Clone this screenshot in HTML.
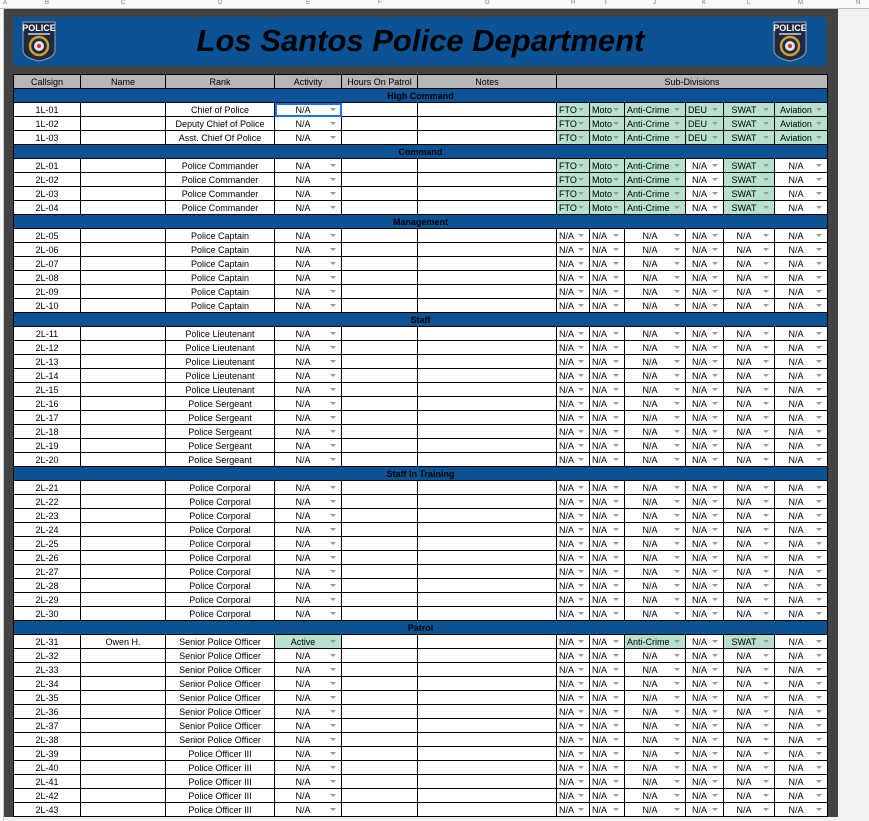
<!DOCTYPE html>
<html><head><meta charset="utf-8"><style>
body{margin:0;width:869px;height:821px;overflow:hidden;background:#f1f1f1;font-family:"Liberation Sans",sans-serif;position:relative}
.colh{position:absolute;left:0;top:0;width:869px;height:8px;background:#f8f9fa;border-bottom:1px solid #c0c0c0;font-size:6px;color:#777;overflow:hidden}
.colh span{position:absolute;top:0}
.rowh{position:absolute;left:0;top:9px;width:3px;height:812px;background:#f8f9fa;border-right:1px solid #ccc}
.frame{position:absolute;left:4px;top:9px;width:834px;height:808px;background:#434343}
.banner{position:absolute;left:13px;top:17px;width:813px;height:49px;background:#0b5394}
.title{position:absolute;left:0;right:0;top:6px;text-align:center;font:italic bold 31px "Liberation Sans",sans-serif;color:#000;padding-left:2px}
.badge{position:absolute;top:3px;width:36px;height:42px}
table{position:absolute;left:13px;top:74px;border-collapse:collapse;table-layout:fixed;width:814px;font-size:9px}
td{border:1px solid #000;height:13px;padding:0 2px;text-align:center;background:#fff;white-space:nowrap;overflow:hidden;line-height:12px;position:relative}
tr.h td{background:#b7b7b7}
tr.s td{background:#0b5394;font-weight:bold}
td.g{background:#b7e1cd}
td.l{text-align:left}
td.d{padding-right:12px}
td.d::after{content:"";position:absolute;right:5px;top:5px;border-left:3px solid transparent;border-right:3px solid transparent;border-top:3px solid #999}
td.sel{outline:2px solid #1a73e8;outline-offset:-2px}
</style></head><body>
<div class="colh"><span style="left:3px">A</span><span style="left:45px">B</span><span style="left:121px">C</span><span style="left:218px">D</span><span style="left:306px">E</span><span style="left:378px">F</span><span style="left:485px">G</span><span style="left:571px">H</span><span style="left:605px">I</span><span style="left:653px">J</span><span style="left:702px">K</span><span style="left:747px">L</span><span style="left:798px">M</span><span style="left:856px">N</span></div>
<div class="rowh"></div>
<div class="frame"></div>
<div class="banner">
<svg class="badge" style="left:8px" viewBox="0 0 36 42"><path d="M2 2H34V30Q34 38 18 41Q2 38 2 30Z" fill="#1c2a44" stroke="#8a93a3" stroke-width="1.2"/><text x="18" y="11" font-size="9" font-weight="bold" fill="#fff" text-anchor="middle" font-family="Liberation Sans">POLICE</text><rect x="7" y="13" width="22" height="2" fill="#aab"/><circle cx="18" cy="26" r="9" fill="none" stroke="#d4a02a" stroke-width="2.5"/><circle cx="18" cy="26" r="5" fill="#dfe3ea"/><circle cx="18" cy="26" r="2" fill="#c33"/></svg>
<div class="title">Los Santos Police Department</div>
<svg class="badge" style="left:759px" viewBox="0 0 36 42"><path d="M2 2H34V30Q34 38 18 41Q2 38 2 30Z" fill="#1c2a44" stroke="#8a93a3" stroke-width="1.2"/><text x="18" y="11" font-size="9" font-weight="bold" fill="#fff" text-anchor="middle" font-family="Liberation Sans">POLICE</text><rect x="7" y="13" width="22" height="2" fill="#aab"/><circle cx="18" cy="26" r="9" fill="none" stroke="#d4a02a" stroke-width="2.5"/><circle cx="18" cy="26" r="5" fill="#dfe3ea"/><circle cx="18" cy="26" r="2" fill="#c33"/></svg>
</div>
<table>
<colgroup><col style="width:67px"><col style="width:85px"><col style="width:109px"><col style="width:67px"><col style="width:76px"><col style="width:139px"><col style="width:33px"><col style="width:35px"><col style="width:61px"><col style="width:38px"><col style="width:51px"><col style="width:53px"></colgroup>
<tr class="h"><td>Callsign</td><td>Name</td><td>Rank</td><td>Activity</td><td>Hours On Patrol</td><td>Notes</td><td colspan="6">Sub-Divisions</td></tr>
<tr class="s"><td colspan="12">High Command</td></tr>
<tr><td>1L-01</td><td></td><td>Chief of Police</td><td class="d sel">N/A</td><td></td><td></td><td class="g l d">FTO</td><td class="g l d">Moto</td><td class="g l d">Anti-Crime</td><td class="g l d">DEU</td><td class="g d">SWAT</td><td class="g d">Aviation</td></tr>
<tr><td>1L-02</td><td></td><td>Deputy Chief of Police</td><td class="d">N/A</td><td></td><td></td><td class="g l d">FTO</td><td class="g l d">Moto</td><td class="g l d">Anti-Crime</td><td class="g l d">DEU</td><td class="g d">SWAT</td><td class="g d">Aviation</td></tr>
<tr><td>1L-03</td><td></td><td>Asst. Chief Of Police</td><td class="d">N/A</td><td></td><td></td><td class="g l d">FTO</td><td class="g l d">Moto</td><td class="g l d">Anti-Crime</td><td class="g l d">DEU</td><td class="g d">SWAT</td><td class="g d">Aviation</td></tr>
<tr class="s"><td colspan="12">Command</td></tr>
<tr><td>2L-01</td><td></td><td>Police Commander</td><td class="d">N/A</td><td></td><td></td><td class="g l d">FTO</td><td class="g l d">Moto</td><td class="g l d">Anti-Crime</td><td class="d">N/A</td><td class="g d">SWAT</td><td class="d">N/A</td></tr>
<tr><td>2L-02</td><td></td><td>Police Commander</td><td class="d">N/A</td><td></td><td></td><td class="g l d">FTO</td><td class="g l d">Moto</td><td class="g l d">Anti-Crime</td><td class="d">N/A</td><td class="g d">SWAT</td><td class="d">N/A</td></tr>
<tr><td>2L-03</td><td></td><td>Police Commander</td><td class="d">N/A</td><td></td><td></td><td class="g l d">FTO</td><td class="g l d">Moto</td><td class="g l d">Anti-Crime</td><td class="d">N/A</td><td class="g d">SWAT</td><td class="d">N/A</td></tr>
<tr><td>2L-04</td><td></td><td>Police Commander</td><td class="d">N/A</td><td></td><td></td><td class="g l d">FTO</td><td class="g l d">Moto</td><td class="g l d">Anti-Crime</td><td class="d">N/A</td><td class="g d">SWAT</td><td class="d">N/A</td></tr>
<tr class="s"><td colspan="12">Management</td></tr>
<tr><td>2L-05</td><td></td><td>Police Captain</td><td class="d">N/A</td><td></td><td></td><td class="l d">N/A</td><td class="l d">N/A</td><td class="d">N/A</td><td class="d">N/A</td><td class="d">N/A</td><td class="d">N/A</td></tr>
<tr><td>2L-06</td><td></td><td>Police Captain</td><td class="d">N/A</td><td></td><td></td><td class="l d">N/A</td><td class="l d">N/A</td><td class="d">N/A</td><td class="d">N/A</td><td class="d">N/A</td><td class="d">N/A</td></tr>
<tr><td>2L-07</td><td></td><td>Police Captain</td><td class="d">N/A</td><td></td><td></td><td class="l d">N/A</td><td class="l d">N/A</td><td class="d">N/A</td><td class="d">N/A</td><td class="d">N/A</td><td class="d">N/A</td></tr>
<tr><td>2L-08</td><td></td><td>Police Captain</td><td class="d">N/A</td><td></td><td></td><td class="l d">N/A</td><td class="l d">N/A</td><td class="d">N/A</td><td class="d">N/A</td><td class="d">N/A</td><td class="d">N/A</td></tr>
<tr><td>2L-09</td><td></td><td>Police Captain</td><td class="d">N/A</td><td></td><td></td><td class="l d">N/A</td><td class="l d">N/A</td><td class="d">N/A</td><td class="d">N/A</td><td class="d">N/A</td><td class="d">N/A</td></tr>
<tr><td>2L-10</td><td></td><td>Police Captain</td><td class="d">N/A</td><td></td><td></td><td class="l d">N/A</td><td class="l d">N/A</td><td class="d">N/A</td><td class="d">N/A</td><td class="d">N/A</td><td class="d">N/A</td></tr>
<tr class="s"><td colspan="12">Staff</td></tr>
<tr><td>2L-11</td><td></td><td>Police Lieutenant</td><td class="d">N/A</td><td></td><td></td><td class="l d">N/A</td><td class="l d">N/A</td><td class="d">N/A</td><td class="d">N/A</td><td class="d">N/A</td><td class="d">N/A</td></tr>
<tr><td>2L-12</td><td></td><td>Police Lieutenant</td><td class="d">N/A</td><td></td><td></td><td class="l d">N/A</td><td class="l d">N/A</td><td class="d">N/A</td><td class="d">N/A</td><td class="d">N/A</td><td class="d">N/A</td></tr>
<tr><td>2L-13</td><td></td><td>Police Lieutenant</td><td class="d">N/A</td><td></td><td></td><td class="l d">N/A</td><td class="l d">N/A</td><td class="d">N/A</td><td class="d">N/A</td><td class="d">N/A</td><td class="d">N/A</td></tr>
<tr><td>2L-14</td><td></td><td>Police Lieutenant</td><td class="d">N/A</td><td></td><td></td><td class="l d">N/A</td><td class="l d">N/A</td><td class="d">N/A</td><td class="d">N/A</td><td class="d">N/A</td><td class="d">N/A</td></tr>
<tr><td>2L-15</td><td></td><td>Police Lieutenant</td><td class="d">N/A</td><td></td><td></td><td class="l d">N/A</td><td class="l d">N/A</td><td class="d">N/A</td><td class="d">N/A</td><td class="d">N/A</td><td class="d">N/A</td></tr>
<tr><td>2L-16</td><td></td><td>Police Sergeant</td><td class="d">N/A</td><td></td><td></td><td class="l d">N/A</td><td class="l d">N/A</td><td class="d">N/A</td><td class="d">N/A</td><td class="d">N/A</td><td class="d">N/A</td></tr>
<tr><td>2L-17</td><td></td><td>Police Sergeant</td><td class="d">N/A</td><td></td><td></td><td class="l d">N/A</td><td class="l d">N/A</td><td class="d">N/A</td><td class="d">N/A</td><td class="d">N/A</td><td class="d">N/A</td></tr>
<tr><td>2L-18</td><td></td><td>Police Sergeant</td><td class="d">N/A</td><td></td><td></td><td class="l d">N/A</td><td class="l d">N/A</td><td class="d">N/A</td><td class="d">N/A</td><td class="d">N/A</td><td class="d">N/A</td></tr>
<tr><td>2L-19</td><td></td><td>Police Sergeant</td><td class="d">N/A</td><td></td><td></td><td class="l d">N/A</td><td class="l d">N/A</td><td class="d">N/A</td><td class="d">N/A</td><td class="d">N/A</td><td class="d">N/A</td></tr>
<tr><td>2L-20</td><td></td><td>Police Sergeant</td><td class="d">N/A</td><td></td><td></td><td class="l d">N/A</td><td class="l d">N/A</td><td class="d">N/A</td><td class="d">N/A</td><td class="d">N/A</td><td class="d">N/A</td></tr>
<tr class="s"><td colspan="12">Staff In Training</td></tr>
<tr><td>2L-21</td><td></td><td>Police Corporal</td><td class="d">N/A</td><td></td><td></td><td class="l d">N/A</td><td class="l d">N/A</td><td class="d">N/A</td><td class="d">N/A</td><td class="d">N/A</td><td class="d">N/A</td></tr>
<tr><td>2L-22</td><td></td><td>Police Corporal</td><td class="d">N/A</td><td></td><td></td><td class="l d">N/A</td><td class="l d">N/A</td><td class="d">N/A</td><td class="d">N/A</td><td class="d">N/A</td><td class="d">N/A</td></tr>
<tr><td>2L-23</td><td></td><td>Police Corporal</td><td class="d">N/A</td><td></td><td></td><td class="l d">N/A</td><td class="l d">N/A</td><td class="d">N/A</td><td class="d">N/A</td><td class="d">N/A</td><td class="d">N/A</td></tr>
<tr><td>2L-24</td><td></td><td>Police Corporal</td><td class="d">N/A</td><td></td><td></td><td class="l d">N/A</td><td class="l d">N/A</td><td class="d">N/A</td><td class="d">N/A</td><td class="d">N/A</td><td class="d">N/A</td></tr>
<tr><td>2L-25</td><td></td><td>Police Corporal</td><td class="d">N/A</td><td></td><td></td><td class="l d">N/A</td><td class="l d">N/A</td><td class="d">N/A</td><td class="d">N/A</td><td class="d">N/A</td><td class="d">N/A</td></tr>
<tr><td>2L-26</td><td></td><td>Police Corporal</td><td class="d">N/A</td><td></td><td></td><td class="l d">N/A</td><td class="l d">N/A</td><td class="d">N/A</td><td class="d">N/A</td><td class="d">N/A</td><td class="d">N/A</td></tr>
<tr><td>2L-27</td><td></td><td>Police Corporal</td><td class="d">N/A</td><td></td><td></td><td class="l d">N/A</td><td class="l d">N/A</td><td class="d">N/A</td><td class="d">N/A</td><td class="d">N/A</td><td class="d">N/A</td></tr>
<tr><td>2L-28</td><td></td><td>Police Corporal</td><td class="d">N/A</td><td></td><td></td><td class="l d">N/A</td><td class="l d">N/A</td><td class="d">N/A</td><td class="d">N/A</td><td class="d">N/A</td><td class="d">N/A</td></tr>
<tr><td>2L-29</td><td></td><td>Police Corporal</td><td class="d">N/A</td><td></td><td></td><td class="l d">N/A</td><td class="l d">N/A</td><td class="d">N/A</td><td class="d">N/A</td><td class="d">N/A</td><td class="d">N/A</td></tr>
<tr><td>2L-30</td><td></td><td>Police Corporal</td><td class="d">N/A</td><td></td><td></td><td class="l d">N/A</td><td class="l d">N/A</td><td class="d">N/A</td><td class="d">N/A</td><td class="d">N/A</td><td class="d">N/A</td></tr>
<tr class="s"><td colspan="12">Patrol</td></tr>
<tr><td>2L-31</td><td>Owen H.</td><td>Senior Police Officer</td><td class="g d">Active</td><td></td><td></td><td class="l d">N/A</td><td class="l d">N/A</td><td class="g l d">Anti-Crime</td><td class="d">N/A</td><td class="g d">SWAT</td><td class="d">N/A</td></tr>
<tr><td>2L-32</td><td></td><td>Senior Police Officer</td><td class="d">N/A</td><td></td><td></td><td class="l d">N/A</td><td class="l d">N/A</td><td class="d">N/A</td><td class="d">N/A</td><td class="d">N/A</td><td class="d">N/A</td></tr>
<tr><td>2L-33</td><td></td><td>Senior Police Officer</td><td class="d">N/A</td><td></td><td></td><td class="l d">N/A</td><td class="l d">N/A</td><td class="d">N/A</td><td class="d">N/A</td><td class="d">N/A</td><td class="d">N/A</td></tr>
<tr><td>2L-34</td><td></td><td>Senior Police Officer</td><td class="d">N/A</td><td></td><td></td><td class="l d">N/A</td><td class="l d">N/A</td><td class="d">N/A</td><td class="d">N/A</td><td class="d">N/A</td><td class="d">N/A</td></tr>
<tr><td>2L-35</td><td></td><td>Senior Police Officer</td><td class="d">N/A</td><td></td><td></td><td class="l d">N/A</td><td class="l d">N/A</td><td class="d">N/A</td><td class="d">N/A</td><td class="d">N/A</td><td class="d">N/A</td></tr>
<tr><td>2L-36</td><td></td><td>Senior Police Officer</td><td class="d">N/A</td><td></td><td></td><td class="l d">N/A</td><td class="l d">N/A</td><td class="d">N/A</td><td class="d">N/A</td><td class="d">N/A</td><td class="d">N/A</td></tr>
<tr><td>2L-37</td><td></td><td>Senior Police Officer</td><td class="d">N/A</td><td></td><td></td><td class="l d">N/A</td><td class="l d">N/A</td><td class="d">N/A</td><td class="d">N/A</td><td class="d">N/A</td><td class="d">N/A</td></tr>
<tr><td>2L-38</td><td></td><td>Senior Police Officer</td><td class="d">N/A</td><td></td><td></td><td class="l d">N/A</td><td class="l d">N/A</td><td class="d">N/A</td><td class="d">N/A</td><td class="d">N/A</td><td class="d">N/A</td></tr>
<tr><td>2L-39</td><td></td><td>Police Officer III</td><td class="d">N/A</td><td></td><td></td><td class="l d">N/A</td><td class="l d">N/A</td><td class="d">N/A</td><td class="d">N/A</td><td class="d">N/A</td><td class="d">N/A</td></tr>
<tr><td>2L-40</td><td></td><td>Police Officer III</td><td class="d">N/A</td><td></td><td></td><td class="l d">N/A</td><td class="l d">N/A</td><td class="d">N/A</td><td class="d">N/A</td><td class="d">N/A</td><td class="d">N/A</td></tr>
<tr><td>2L-41</td><td></td><td>Police Officer III</td><td class="d">N/A</td><td></td><td></td><td class="l d">N/A</td><td class="l d">N/A</td><td class="d">N/A</td><td class="d">N/A</td><td class="d">N/A</td><td class="d">N/A</td></tr>
<tr><td>2L-42</td><td></td><td>Police Officer III</td><td class="d">N/A</td><td></td><td></td><td class="l d">N/A</td><td class="l d">N/A</td><td class="d">N/A</td><td class="d">N/A</td><td class="d">N/A</td><td class="d">N/A</td></tr>
<tr><td>2L-43</td><td></td><td>Police Officer III</td><td class="d">N/A</td><td></td><td></td><td class="l d">N/A</td><td class="l d">N/A</td><td class="d">N/A</td><td class="d">N/A</td><td class="d">N/A</td><td class="d">N/A</td></tr>
</table>
</body></html>
